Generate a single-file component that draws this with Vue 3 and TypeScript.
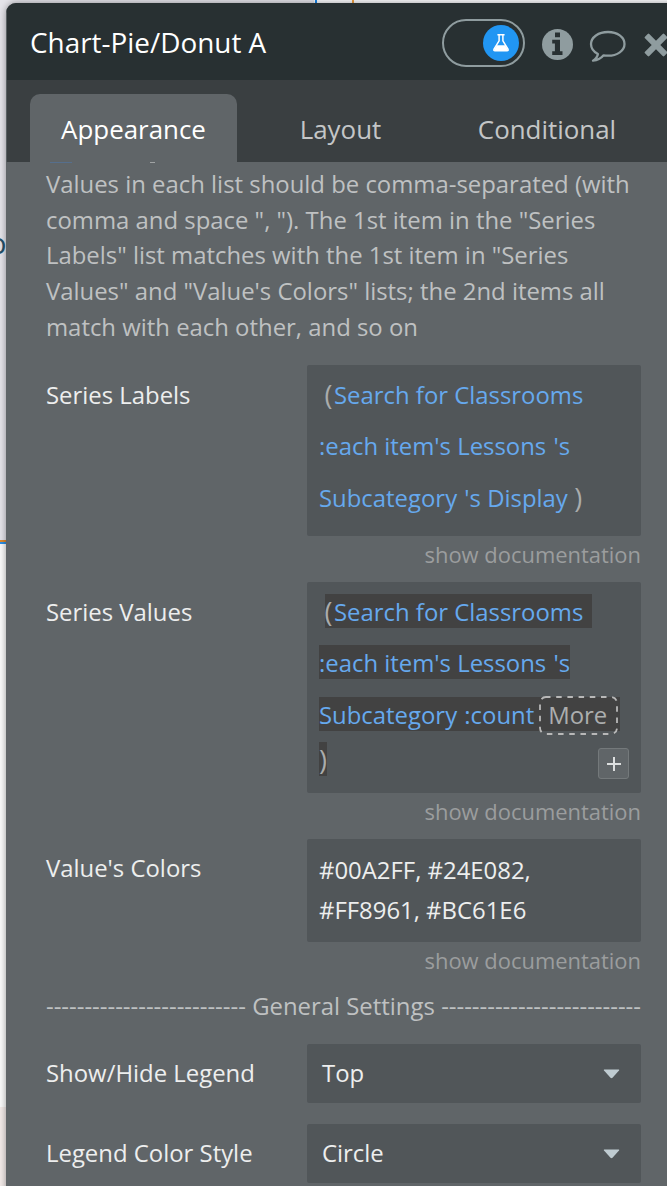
<script setup lang="ts">
interface Token { text: string; kind: 'ref' | 'paren' | 'more' }
interface ExprLine { tokens: Token[]; indent?: boolean; trail?: boolean; last?: boolean }

const description: string[] = [
  'Values in each list should be comma-separated (with',
  'comma and space ", "). The 1st item in the "Series',
  'Labels" list matches with the 1st item in "Series',
  'Values" and "Value\'s Colors" lists; the 2nd items all',
  'match with each other, and so on',
]

const labelLines: ExprLine[] = [
  { indent: true, tokens: [{ text: '(', kind: 'paren' }, { text: 'Search for Classrooms', kind: 'ref' }] },
  { tokens: [{ text: ":each item's Lessons", kind: 'ref' }, { text: " 's", kind: 'ref' }] },
  { tokens: [{ text: 'Subcategory', kind: 'ref' }, { text: " 's Display", kind: 'ref' }, { text: ' )', kind: 'paren' }] },
]

const valueLines: ExprLine[] = [
  { indent: true, trail: true, tokens: [{ text: '(', kind: 'paren' }, { text: 'Search for Classrooms', kind: 'ref' }] },
  { tokens: [{ text: ":each item's Lessons", kind: 'ref' }, { text: " 's", kind: 'ref' }] },
  { tokens: [{ text: 'Subcategory', kind: 'ref' }, { text: ' :count', kind: 'ref' }, { text: 'More', kind: 'more' }] },
  { last: true, tokens: [{ text: ')', kind: 'paren' }] },
]

const tabs = [
  { name: 'Appearance', cls: 'first' },
  { name: 'Layout', cls: 'second' },
  { name: 'Conditional', cls: 'third' },
]

const selects = [
  { label: 'Show/Hide Legend', value: 'Top' },
  { label: 'Legend Color Style', value: 'Circle' },
]

const dashes = '-'.repeat(26)
</script>

<template>
  <div class="screen">
    <div class="canvas-top"></div>
    <div class="canvas-low"></div>
    <div class="guide-h"></div>
    <div class="canvas-foot"></div>
    <div class="guide-v blue"></div>
    <div class="guide-v orange"></div>
    <span class="stray">o</span>

    <section class="panel">
      <header class="head">
        <h1>Chart-Pie/Donut A</h1>
        <div class="toggle">
          <div class="knob">
            <svg width="18" height="20" viewBox="0 0 18 20">
              <path d="M5.400 1.700h7.200M7.100 1.700v6.100L2 16.200Q1.300 17.800 3 17.800h12q1.700 0 1-1.600L10.900 7.800V1.700" fill="none" stroke="#fff" stroke-width="1.500" />
              <path d="M4.800 12.300h8.400l3 5H1.800z" fill="#fff" />
            </svg>
          </div>
        </div>
        <svg class="info" width="31" height="31" viewBox="0 0 31 31">
          <circle cx="15.500" cy="15.500" r="15.500" fill="#8f9c9f" />
          <path d="M13 3.500h5v4.700h-5zM10.200 10.800H18v11.400h2.500V26H10.200v-3.800h2.700v-7.600h-2.700z" fill="#283032" />
        </svg>
        <svg class="bubble" width="37" height="33" viewBox="0 0 37 33">
          <path d="M19 2C9.500 2 2 7.200 2 14c0 4.200 2.700 7.800 6.900 10-.4 2.600-1.900 4.900-4.900 6.700 4.700-.4 8.200-2.500 10.600-5.400 1.400.3 2.900.4 4.400.4 9.400 0 16.500-5.100 16.500-11.800S28.400 2 19 2z" fill="none" stroke="#8f9c9f" stroke-width="2.300" stroke-linejoin="round" />
        </svg>
        <svg class="close" width="24" height="24" viewBox="0 0 24 24">
          <path d="M5.300 1 12 7.700 18.700 1q.8-.8 1.600 0L23 3.700q.8.800 0 1.600L16.300 12l6.700 6.700q.8.800 0 1.600L20.300 23q-.8.800-1.600 0L12 16.300 5.300 23q-.8.800-1.600 0L1 20.300q-.8-.8 0-1.600L7.700 12 1 5.300q-.8-.8 0-1.600L3.700 1q.8-.8 1.600 0z" fill="#8f9c9f" />
        </svg>
      </header>

      <nav class="tabs">
        <div v-for="t in tabs" :key="t.name" class="tab" :class="t.cls"><span>{{ t.name }}</span></div>
      </nav>

      <div class="body">
        <i class="clip link"></i><i class="clip tail"></i>
        <div class="desc">
          <div v-for="(l, i) in description" :key="i">{{ l }}</div>
        </div>

        <div class="row">
          <label>Series Labels</label>
          <div class="field expr labels">
            <div v-for="(l, i) in labelLines" :key="i" class="line" :class="{ indent: l.indent }">
              <span v-for="(t, j) in l.tokens" :key="j" :class="t.kind">{{ t.text }}</span>
            </div>
          </div>
        </div>
        <div class="doc">show documentation</div>

        <div class="row">
          <label>Series Values</label>
          <div class="field expr values">
            <div v-for="(l, i) in valueLines" :key="i" class="line" :class="{ indent: l.indent, last: l.last }">
              <div class="sel" :class="{ trail: l.trail }">
                <span v-for="(t, j) in l.tokens" :key="j" :class="t.kind">{{ t.text }}<svg v-if="t.kind === 'more'" class="dash" width="79" height="39" viewBox="0 0 79 39"><rect x="1" y="1" width="77" height="37" rx="6" fill="none" stroke="#b8b8b8" stroke-width="1.800" stroke-dasharray="5.500 5.700" stroke-dashoffset="1" /></svg></span>
              </div>
            </div>
            <button class="plus">
              <svg width="14" height="14" viewBox="0 0 14 14"><path d="M7 0v14M0 7h14" stroke="#dcdedf" stroke-width="2" /></svg>
            </button>
          </div>
        </div>
        <div class="doc">show documentation</div>

        <div class="row up">
          <label>Value's Colors</label>
          <div class="field colors">
            <div>#00A2FF, #24E082,</div>
            <div>#FF8961, #BC61E6</div>
          </div>
        </div>
        <div class="doc third">show documentation</div>

        <div class="divider"><span>{{ dashes }}</span><span class="gs">General Settings</span><span>{{ dashes }}</span></div>

        <div v-for="s in selects" :key="s.label" class="row pick up">
          <label>{{ s.label }}</label>
          <div class="field select">
            <span>{{ s.value }}</span>
            <svg width="17" height="10" viewBox="0 0 17 10"><path d="M1.200 .5h14.600q.9.300.2 1.100L9.500 8.700q-1 .9-2 0L1 1.600Q.3.800 1.200.5z" fill="#bfcbd1" /></svg>
          </div>
        </div>
      </div>
    </section>
  </div>
</template>

<style>
body { background: #fff; }
</style>

<style scoped>
* { box-sizing: border-box; }
.screen {
  position: relative; width: 667px; height: 1186px; overflow: hidden;
  background: #fcfcfe; padding: 3px 0 0 6px;
  font-family: "Open Sans", "Noto Sans", sans-serif; font-size: 23.900px; color: #edeeee;
  white-space: nowrap;
}
.canvas-top { position: absolute; left: 0; top: 0; width: 314px; height: 541px; background: #e5e4ea; }
.canvas-low { position: absolute; left: 0; top: 544px; width: 10px; height: 563px; background: #fbfbfb; }
.canvas-foot { position: absolute; left: 0; top: 1107px; width: 10px; height: 79px; background: #f3ebe9; }
.guide-h { position: absolute; left: 0; top: 540px; width: 10px; height: 4px; background: linear-gradient(#e08a2c 50%, #2c8fe6 50%); }
.guide-v { position: absolute; top: 0; width: 2px; height: 5px; }
.guide-v.blue { left: 315px; background: #1683e8; }
.guide-v.orange { left: 352px; background: #f0a040; }
.stray { position: absolute; left: -11px; top: 226px; font-size: 29px; line-height: 34px; color: #245069; }

.panel {
  position: relative; width: 680px; height: 1190px; border-radius: 10px 0 0 0; overflow: hidden;
  background: #606568; box-shadow: 0 0 7px rgba(0, 0, 0, .4);
}
.head { display: flex; height: 77px; background: #283032; border-left: 1px solid #596063; }
h1 { margin: 21px 0 0 23px; width: 412px; font-size: 27.900px; line-height: 36px; font-weight: 400; color: #fff; }
.toggle { width: 83px; height: 48px; margin-top: 16px; border: 2px solid #8f9c9f; border-radius: 24px; padding: 4px 3px 0 40px; }
.knob { width: 36px; height: 36px; margin-left: -1px; border-radius: 50%; background: #2196f3; display: flex; align-items: center; justify-content: center; }
.info { margin: 26px 0 0 17px; }
.bubble { margin: 27px 0 0 16px; }
.close { margin: 30px 0 0 18px; flex: none; }

.tabs { display: flex; height: 82px; padding: 14px 0 0 24px; background: #3a3f41; color: #c4c6c7; border-left: 1px solid #596063; font-size: 25.900px; }
.tab { height: 68px; line-height: 34px; padding-top: 18px; display: flex; justify-content: center; }
.tab.first { width: 207px; background: #606568; border-radius: 10px 10px 0 0; color: #fff; margin-left: -1px; }
.tab.second { width: 207px; }
.tab.third { width: 206px; }

.body { position: relative; height: 1030px; padding: 4px 32px 0 40px; }
.clip { position: absolute; top: 0; height: 1px; }
.clip.link { left: 44px; width: 22px; background: #566f8d; }
.clip.tail { left: 144px; width: 5px; background: #a0a3a4; }
.desc { height: 199px; line-height: 35.700px; color: #bfc1c2; }
.row { display: grid; grid-template-columns: 261px 334px; }
label { line-height: 33px; padding-top: 13px; }
.up label { padding-top: 12px; }
.field { background: #515659; border-radius: 2px; }
.expr { padding: 6px 0 0 12px; font-size: 23.900px; }
.labels { height: 171px; }
.values { height: 211px; position: relative; }
.line { height: 51.400px; padding-top: 7px; line-height: 34px; white-space: pre; display: flex; }
.line.indent { padding-left: 6px; }
.line.last { padding-top: 1px; }
.sel { display: flex; height: 34px; margin-top: -1px; padding-top: 1px; background: #424242; }
.sel.trail { padding-right: 9px; }
.ref { color: #66a9ee; }
.ref + .ref { margin-left: 1px; }
.paren { color: #aaacac; font-size: 27px; line-height: 33px; }
.ref + .paren { margin-left: -.5px; }
.indent .paren { width: 9px; margin-left: -.5px; margin-right: .5px; }
.more { position: relative; margin: 0 4px 0 5px; padding: 0 9px; color: #acaeae; }
.dash { position: absolute; left: -.5px; top: -2px; }
.plus { position: absolute; right: 12px; bottom: 14px; width: 31px; height: 31px; display: flex; align-items: center; justify-content: center; padding: 0; background: #606568; border: 1px solid #74797b; border-radius: 3px; }
.doc { height: 46px; width: 595px; padding-top: 3px; line-height: 32px; font-size: 21.950px; text-align: right; color: #9b9d9e; }
.doc.third { height: 47px; }
.colors { height: 103px; padding: 11px 0 0 12px; line-height: 40px; }
.divider { display: flex; justify-content: space-between; width: 595px; height: 55px; line-height: 34px; color: #bfc1c2; }
.pick { height: 80px; }
.pick .field { height: 59px; display: flex; align-items: center; justify-content: space-between; padding: 0 21px 0 15px; }
.pick .field span { margin-top: -3px; }
</style>
